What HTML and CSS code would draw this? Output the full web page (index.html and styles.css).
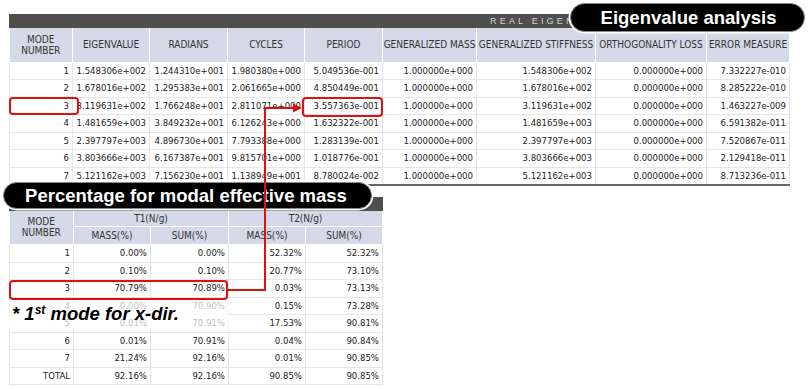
FILE: index.html
```html
<!DOCTYPE html>
<html>
<head>
    <title>Eigenvalue analysis - Results</title>
    <link rel="stylesheet" href="styles.css">
</head>
<body>
    <div class="page">
        <div class="result eigen">
            <div class="bar">REAL EIGENVALUES</div>
            <table>
                <colgroup>
                    <col style="width: 63px"><col style="width: 77px"><col style="width: 78px">
                    <col style="width: 77px"><col style="width: 78px"><col style="width: 94px">
                    <col style="width: 119px"><col style="width: 111px"><col style="width: 83px">
                </colgroup>
                <thead>
                    <tr>
                        <th>MODE<br>NUMBER</th>
                        <th>EIGENVALUE</th>
                        <th>RADIANS</th>
                        <th>CYCLES</th>
                        <th>PERIOD</th>
                        <th>GENERALIZED MASS</th>
                        <th>GENERALIZED STIFFNESS</th>
                        <th>ORTHOGONALITY LOSS</th>
                        <th>ERROR MEASURE</th>
                    </tr>
                </thead>
                <tbody>
                    <tr><td>1</td><td>1.548306e+002</td><td>1.244310e+001</td><td>1.980380e+000</td><td>5.049536e-001</td><td>1.000000e+000</td><td>1.548306e+002</td><td>0.000000e+000</td><td>7.332227e-010</td></tr>
                    <tr><td>2</td><td>1.678016e+002</td><td>1.295383e+001</td><td>2.061665e+000</td><td>4.850449e-001</td><td>1.000000e+000</td><td>1.678016e+002</td><td>0.000000e+000</td><td>8.285222e-010</td></tr>
                    <tr><td>3</td><td>3.119631e+002</td><td>1.766248e+001</td><td>2.811071e+000</td><td>3.557363e-001</td><td>1.000000e+000</td><td>3.119631e+002</td><td>0.000000e+000</td><td>1.463227e-009</td></tr>
                    <tr><td>4</td><td>1.481659e+003</td><td>3.849232e+001</td><td>6.126243e+000</td><td>1.632322e-001</td><td>1.000000e+000</td><td>1.481659e+003</td><td>0.000000e+000</td><td>6.591382e-011</td></tr>
                    <tr><td>5</td><td>2.397797e+003</td><td>4.896730e+001</td><td>7.793388e+000</td><td>1.283139e-001</td><td>1.000000e+000</td><td>2.397797e+003</td><td>0.000000e+000</td><td>7.520867e-011</td></tr>
                    <tr><td>6</td><td>3.803666e+003</td><td>6.167387e+001</td><td>9.815701e+000</td><td>1.018776e-001</td><td>1.000000e+000</td><td>3.803666e+003</td><td>0.000000e+000</td><td>2.129418e-011</td></tr>
                    <tr><td>7</td><td>5.121162e+003</td><td>7.156230e+001</td><td>1.138949e+001</td><td>8.780024e-002</td><td>1.000000e+000</td><td>5.121162e+003</td><td>0.000000e+000</td><td>8.713236e-011</td></tr>
                </tbody>
            </table>
        </div>

        <div class="result mass">
            <div class="bar"></div>
            <table>
                <colgroup>
                    <col style="width: 64px"><col style="width: 77px"><col style="width: 78px">
                    <col style="width: 77px"><col style="width: 77px">
                </colgroup>
                <thead>
                    <tr>
                        <th rowspan="2">MODE<br>NUMBER</th>
                        <th colspan="2">T1(N/g)</th>
                        <th colspan="2">T2(N/g)</th>
                    </tr>
                    <tr class="sub">
                        <th>MASS(%)</th>
                        <th>SUM(%)</th>
                        <th>MASS(%)</th>
                        <th>SUM(%)</th>
                    </tr>
                </thead>
                <tbody>
                    <tr><td>1</td><td>0.00%</td><td>0.00%</td><td>52.32%</td><td>52.32%</td></tr>
                    <tr><td>2</td><td>0.10%</td><td>0.10%</td><td>20.77%</td><td>73.10%</td></tr>
                    <tr><td>3</td><td>70.79%</td><td>70.89%</td><td>0.03%</td><td>73.13%</td></tr>
                    <tr><td>4</td><td>0.00%</td><td>70.90%</td><td>0.15%</td><td>73.28%</td></tr>
                    <tr><td>5</td><td>0.01%</td><td>70.91%</td><td>17.53%</td><td>90.81%</td></tr>
                    <tr><td>6</td><td>0.01%</td><td>70.91%</td><td>0.04%</td><td>90.84%</td></tr>
                    <tr><td>7</td><td>21.24%</td><td>92.16%</td><td>0.01%</td><td>90.85%</td></tr>
                    <tr><td>TOTAL</td><td>92.16%</td><td>92.16%</td><td>90.85%</td><td>90.85%</td></tr>
                </tbody>
            </table>
        </div>

        <div class="note"><span>* 1<sup>st</sup> mode for x-dir.</span></div>
        <div class="callout callout-eigen">Eigenvalue analysis</div>
        <div class="callout callout-mass">Percentage for modal effective mass</div>

        <svg class="marks" width="811" height="389" viewBox="0 0 811 389">
            <g fill="none" stroke="#e01010" stroke-width="2">
                <rect x="10" y="98" width="68" height="16" rx="3"/>
                <rect x="303" y="98" width="79" height="18" rx="3"/>
                <rect x="10" y="281" width="217" height="18" rx="3"/>
                <polyline points="228,290 265,290 265,108 295,108"/>
            </g>
            <polygon points="293,103.5 302,108 293,112.5" fill="#e01010"/>
        </svg>
    </div>
</body>
</html>
```

FILE: styles.css
```css
* {
    box-sizing: border-box;
}
body {
    margin: 0;
    font-family: "Liberation Sans", Arial, sans-serif;
    color: #222;
    background: #fff;
}
.page {
    position: relative;
    width: 811px;
    height: 389px;
    overflow: hidden;
    padding: 14px 0 0 9px;
}
.result.eigen {
    width: 780px;
}
.result.mass {
    width: 374px;
    margin-top: 11px;
}
.bar {
    height: 14px;
    background: #4f4f4f;
    color: #d4d4d4;
    font-size: 9px;
    line-height: 14px;
    letter-spacing: 3.2px;
    white-space: nowrap;
}
.eigen .bar {
    padding-left: 481px;
}
table {
    width: 100%;
    border-collapse: collapse;
    table-layout: fixed;
}
th {
    background: #d5d9e7;
    color: #333;
    font-family: "DejaVu Sans Condensed", "DejaVu Sans", sans-serif;
    font-stretch: condensed;
    font-weight: normal;
    font-size: 10px;
    line-height: 11px;
    padding: 0;
    white-space: nowrap;
    border-right: 1px solid #fff;
    border-bottom: 1px solid #fff;
}
.eigen th {
    height: 34px;
}
.mass th {
    height: 16px;
}
.mass .sub th {
    height: 18px;
}
td {
    height: 17.5px;
    padding: 0 3px;
    font-family: "DejaVu Sans Condensed", "DejaVu Sans", sans-serif;
    font-stretch: condensed;
    font-size: 9.5px;
    line-height: 12px;
    text-align: right;
    white-space: nowrap;
    border: 1px solid #e6e6e6;
}
.eigen tbody tr:last-child td {
    border-bottom: 2px solid #666;
}
.note {
    position: absolute;
    left: 0;
    top: 298px;
    width: 229px;
    height: 32px;
    padding-left: 12px;
    display: flex;
    align-items: center;
    background: rgba(255, 255, 255, 0.7);
    color: #000;
    font-size: 18.5px;
    font-weight: bold;
    font-style: italic;
    white-space: nowrap;
}
.note sup {
    font-size: 12px;
    line-height: 0;
    vertical-align: 6px;
}
.callout {
    position: absolute;
    display: flex;
    align-items: center;
    justify-content: center;
    background: #000;
    color: #fff;
    font-size: 18.5px;
    font-weight: bold;
    white-space: nowrap;
    border: 1px solid #888;
    border-radius: 15px;
    box-shadow: 0 0 0 1.5px #fff;
}
.callout-eigen {
    left: 570px;
    top: 3px;
    width: 235px;
    height: 29px;
    padding-left: 2px;
}
.callout-mass {
    left: 3px;
    top: 182px;
    width: 369px;
    height: 27px;
    padding-right: 3px;
    border-radius: 14px;
}
.marks {
    position: absolute;
    left: 0;
    top: 0;
}
```
